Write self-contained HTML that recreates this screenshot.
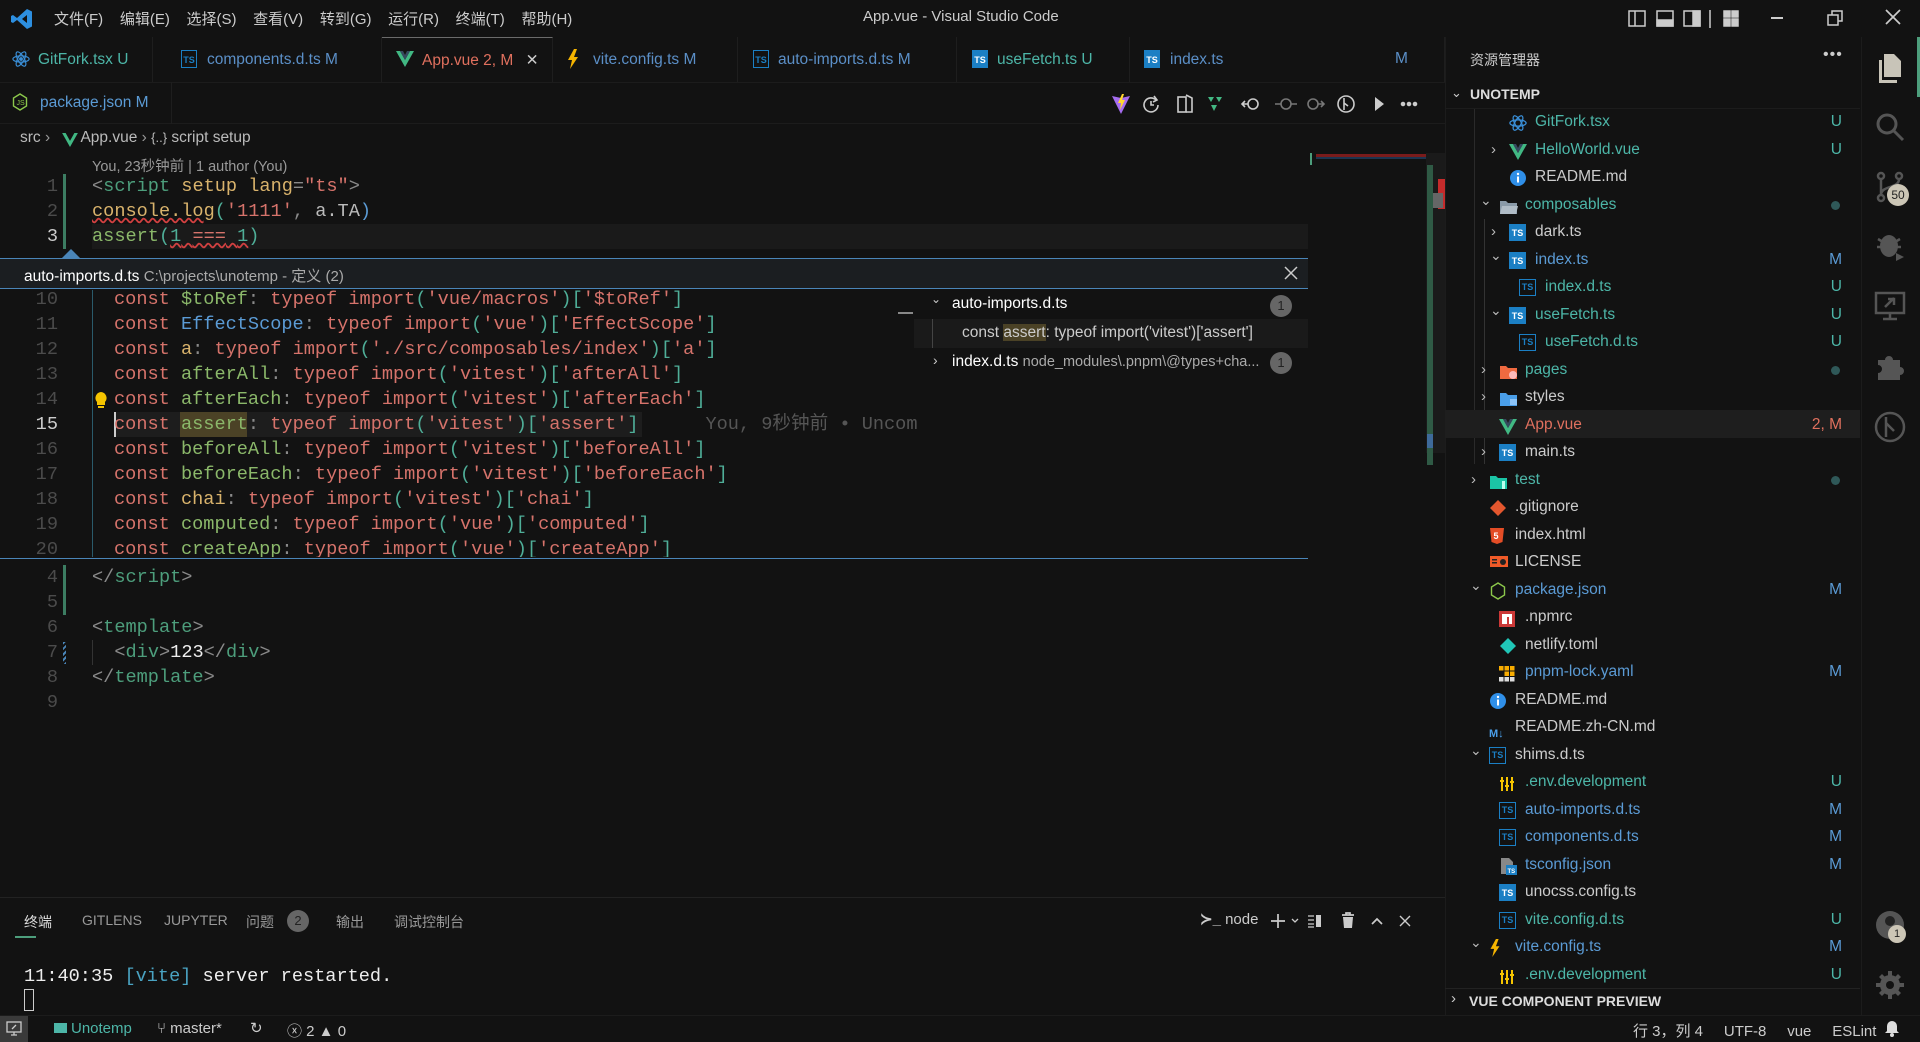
<!DOCTYPE html>
<html><head><meta charset="utf-8">
<style>
*{margin:0;padding:0;box-sizing:border-box}
body{width:1920px;height:1042px;background:#121212;overflow:hidden;position:relative;font-family:"Liberation Sans","Noto Sans CJK SC",sans-serif;color:#ccc;font-size:15px}
.a{position:absolute;white-space:nowrap}
.mono{font-family:"Liberation Mono","Noto Sans CJK SC",monospace;font-size:18.6px}
.ln{position:absolute;width:58px;text-align:right;color:#4b4b4b;font-family:"Liberation Mono",monospace;font-size:18.6px;line-height:25px}
.cl{position:absolute;left:92px;line-height:25px;font-family:"Liberation Mono",monospace;font-size:18.6px;white-space:pre}
.pl{left:114px}
.k{color:#d6736b}.g{color:#8bb86a}.p{color:#4fae98}.s{color:#d6736b}.c{color:#8a8a8a}.b{color:#5b9bd5}.t{color:#4d9e7c}.gr{color:#777}
.tab{position:absolute;height:45px;line-height:45px;border-right:1px solid #1e1e1e;padding-left:16px;font-size:15.5px;color:#5b8fc7}
.row{position:absolute;left:1445px;width:415px;height:27.5px;line-height:27.5px;font-size:15.5px}
.row .ic{position:absolute;top:6px;width:16px;height:16px}
.row .bd{position:absolute;right:18px;top:0}
.chev{position:absolute;top:0;color:#bbb;font-size:13px}
.ts{background:#1b7fc4;color:#fff;font-size:9px;font-weight:bold;text-align:center;line-height:22px;padding-top:2px}
.tso{border:1.5px solid #1b7fc4;color:#1b7fc4;font-size:9px;font-weight:bold;text-align:center;line-height:20px}
.ab{position:absolute;left:1874px;width:32px;height:32px}
</style></head><body>

<!-- title bar -->
<div class="a" style="left:0;top:0;width:1920px;height:37px;background:#121212"></div>
<svg class="a" style="left:10px;top:7px" width="24" height="24" viewBox="0 0 24 24"><path d="M17 2l5 2.5v15L17 22 7 13l-4 3-2-1V9l2-1 4 3 10-9zm0 6l-5 4 5 4z" fill="#2d8fe0"/></svg>
<div class="a" style="left:54px;top:8px;font-size:15px;color:#ccc;word-spacing:0">文件(F)&nbsp;&nbsp;&nbsp;&nbsp;编辑(E)&nbsp;&nbsp;&nbsp;&nbsp;选择(S)&nbsp;&nbsp;&nbsp;&nbsp;查看(V)&nbsp;&nbsp;&nbsp;&nbsp;转到(G)&nbsp;&nbsp;&nbsp;&nbsp;运行(R)&nbsp;&nbsp;&nbsp;&nbsp;终端(T)&nbsp;&nbsp;&nbsp;&nbsp;帮助(H)</div>
<div class="a" style="left:863px;top:8px;font-size:15px;color:#ccc">App.vue - Visual Studio Code</div>
<svg class="a" style="left:1627px;top:8px" width="120" height="22" viewBox="0 0 120 22" fill="none" stroke="#ccc" stroke-width="1.5"><rect x="2" y="3" width="16" height="15"/><line x1="8" y1="3" x2="8" y2="18"/><rect x="30" y="3" width="16" height="15"/><rect x="30" y="12" width="16" height="6" fill="#ccc"/><rect x="57" y="3" width="16" height="15"/><rect x="66" y="3" width="7" height="15" fill="#ccc"/><line x1="83" y1="2" x2="83" y2="20"/><rect x="97" y="3" width="6" height="6" fill="#ccc"/><rect x="105" y="3" width="6" height="6" fill="#ccc"/><rect x="97" y="11" width="6" height="7" fill="#ccc"/><rect x="105" y="11" width="6" height="7" fill="#ccc"/></svg>
<div class="a" style="left:1771px;top:17px;width:12px;height:2px;background:#ccc"></div>
<svg class="a" style="left:1826px;top:9px" width="18" height="18" viewBox="0 0 18 18" fill="none" stroke="#ccc" stroke-width="1.5"><rect x="2" y="6" width="10" height="10"/><path d="M6 6V2h10v10h-4"/></svg>
<svg class="a" style="left:1884px;top:8px" width="18" height="18" viewBox="0 0 18 18" stroke="#ccc" stroke-width="1.7"><path d="M2 2l14 14M16 2L2 16"/></svg>

<!-- tabs -->
<div class="a" style="left:0;top:37px;width:1445px;height:87px;background:#121212;border-bottom:1px solid #1c1c1c"></div>
<div class="a" style="left:0;top:82px;width:1445px;height:1px;background:#1c1c1c"></div>
<div class="tab" style="left:0;top:37px;width:153px;color:#4db6a8;padding-left:38px">GitFork.tsx U</div>
<svg class="a" style="left:12px;top:50px" width="18" height="18" viewBox="0 0 20 20" fill="none" stroke="#3a8fd8" stroke-width="1.3"><ellipse cx="10" cy="10" rx="9" ry="3.5"/><ellipse cx="10" cy="10" rx="9" ry="3.5" transform="rotate(60 10 10)"/><ellipse cx="10" cy="10" rx="9" ry="3.5" transform="rotate(120 10 10)"/><circle cx="10" cy="10" r="1.5" fill="#3a8fd8"/></svg>
<div class="tab" style="left:153px;top:37px;width:229px;padding-left:54px">components.d.ts M</div>
<div class="a tso" style="left:181px;top:50px;width:16px;height:18px;line-height:18px">TS</div>
<div class="tab" style="left:382px;top:37px;width:171px;background:#121212;border-top:1px solid #6b6b6b;color:#e0705e;padding-left:40px">App.vue 2, M <span style="color:#ccc;margin-left:8px">✕</span></div>
<svg class="a" style="left:396px;top:51px" width="18" height="16" viewBox="0 0 18 16"><path d="M0 0h4l5 9 5-9h4L9 16z" fill="#41b883"/><path d="M4 0h3l2 4 2-4h3L9 9z" fill="#35495e"/></svg>
<div class="tab" style="left:553px;top:37px;width:185px;padding-left:40px">vite.config.ts M</div>
<svg class="a" style="left:567px;top:49px" width="12" height="20" viewBox="0 0 12 20"><path d="M7 0L1 11h4l-2 9 8-12H7l3-8z" fill="#f5b400"/></svg>
<div class="tab" style="left:738px;top:37px;width:219px;padding-left:40px">auto-imports.d.ts M</div>
<div class="a tso" style="left:753px;top:50px;width:16px;height:18px;line-height:18px">TS</div>
<div class="tab" style="left:957px;top:37px;width:173px;color:#4db6a8;padding-left:40px">useFetch.ts U</div>
<div class="a ts" style="left:972px;top:50px;width:16px;height:18px;line-height:16px">TS</div>
<div class="tab" style="left:1130px;top:37px;width:315px;padding-left:40px">index.ts</div>
<div class="a" style="left:1395px;top:50px;color:#5b8fc7;font-size:15.5px">M</div>
<div class="a ts" style="left:1144px;top:50px;width:16px;height:18px;line-height:16px">TS</div>
<div class="tab" style="left:0;top:82px;width:172px;padding-left:40px;height:42px;line-height:42px;color:#5b9bd5">package.json M</div>
<svg class="a" style="left:12px;top:93px" width="16" height="18" viewBox="0 0 16 18" fill="none" stroke="#8cc84b" stroke-width="1.4"><path d="M8 1l6.5 4v8L8 17 1.5 13V5z"/><text x="4.5" y="12" font-size="7" fill="#8cc84b" stroke="none">JS</text></svg>
<!-- editor actions -->
<svg class="a" style="left:1110px;top:92px" width="310" height="24" viewBox="0 0 310 24" fill="none" stroke="#ccc" stroke-width="1.6">
<path d="M2 4l9 18 9-18-9 2z" fill="#a56cf0" stroke="none"/><path d="M12 2l-4 9h3l-1 7 5-10h-3l2-6z" fill="#ffd62e" stroke="none"/>
<path d="M46 8a7 7 0 1 0 2 5"/><path d="M44 4l3 4-4 2"/><path d="M41 9v4h3"/>
<rect x="68" y="5" width="8" height="15"/><path d="M76 3l6 3v14h-6"/>
<path d="M98 5l6 0 -3 5z" fill="#42b883" stroke="none"/><path d="M106 5h6l-3 5z" fill="#42b883" stroke="none"/><path d="M101 13h6l-3 6z" fill="#42b883" stroke="none"/>
<circle cx="143" cy="12" r="5"/><path d="M138 12h-6m3-3l-3 3 3 3"/>
<circle cx="176" cy="12" r="5" stroke="#777"/><path d="M165 12h6m10 0h6" stroke="#777"/>
<circle cx="203" cy="12" r="5" stroke="#777"/><path d="M208 12h6m-3-3l3 3-3 3" stroke="#777"/>
<circle cx="236" cy="12" r="8"/><path d="M234 6v12m0-7l4 3"/>
<path d="M265 5l9 7-9 7z" fill="#ccc" stroke="none"/>
<circle cx="293" cy="12" r="1.5" fill="#ccc"/><circle cx="299" cy="12" r="1.5" fill="#ccc"/><circle cx="305" cy="12" r="1.5" fill="#ccc"/></svg>

<!-- breadcrumb -->
<div class="a" style="left:20px;top:129px;font-size:15.5px;color:#bbb">src <span style="color:#999">›</span> <span style="display:inline-block;width:26px"></span>App.vue <span style="color:#999">›</span> <span style="font-size:13px">{..}</span> script setup</div>
<svg class="a" style="left:62px;top:133px" width="16" height="14" viewBox="0 0 18 16"><path d="M0 0h4l5 9 5-9h4L9 16z" fill="#41b883"/></svg>
<div class="a" style="left:92px;top:155px;font-size:14.5px;color:#999">You, 23秒钟前 | 1 author (You)</div>

<!-- editor top lines -->
<div class="a" style="left:63px;top:174px;width:3px;height:75px;background:#3c7d62"></div>
<div class="a" style="left:92px;top:224px;width:1216px;height:25px;background:#1a1a1a"></div>
<div class="ln" style="top:174px">1</div><div class="cl" style="top:174px"><span class="c">&lt;</span><span class="t">script</span> <span style="color:#d9b36c">setup</span> <span style="color:#d9b36c">lang</span><span class="c">=</span><span class="s">"ts"</span><span class="c">&gt;</span></div>
<div class="ln" style="top:199px">2</div><div class="cl" style="top:199px"><span style="color:#d9b36c;text-decoration:underline wavy #d04040">console.log</span><span class="p">(</span><span class="s">'1111'</span><span class="c">,</span> <span style="color:#bbb">a.TA</span><span class="b">)</span></div>
<div class="ln" style="top:224px;color:#ccc">3</div><div class="cl" style="top:224px"><span class="g">assert</span><span class="p">(</span><span style="text-decoration:underline wavy #d04040"><span class="p">1</span> <span class="k">===</span> <span class="p">1</span></span><span class="p">)</span></div>
<div class="a" style="left:62px;top:249px;width:0;height:0;border-left:9px solid transparent;border-right:9px solid transparent;border-bottom:9px solid #4a85b8"></div>

<!-- peek -->
<div class="a" style="left:0;top:258px;width:1308px;height:301px;border-top:1.5px solid #4a85b8;border-bottom:1.5px solid #4a85b8;background:#121212"></div>
<div class="a" style="left:0;top:259px;width:1308px;height:30px;background:#1b1e21;border-bottom:1px solid #4a85b8"></div>
<div class="a" style="left:24px;top:265px;font-size:15.5px;color:#fff">auto-imports.d.ts <span style="color:#aaa;font-size:15px">C:\projects\unotemp - 定义 (2)</span></div>
<svg class="a" style="left:1284px;top:266px" width="14" height="14" viewBox="0 0 14 14" stroke="#ccc" stroke-width="1.5"><path d="M1 1l12 12M13 1L1 13"/></svg>
<div class="a" style="left:0;top:290px;width:918px;height:267px;overflow:hidden">
<div class="a" style="left:92px;top:0;width:1px;height:267px;background:#2a5a6a"></div>
<div class="a" style="left:114px;top:122px;width:528px;height:25px;background:#1d1d1d"></div>
<div class="a" style="left:180px;top:122px;width:67px;height:25px;background:#4b4226"></div>
<div class="a" style="left:114px;top:122px;width:2px;height:25px;background:#ccc"></div>
<div class="ln" style="top:-3px">10</div><div class="cl pl" style="top:-3px"><span class="k">const</span> <span class="g">$toRef</span><span class="c">:</span> <span class="k">typeof import</span><span class="p">(</span><span class="s">'vue/macros'</span><span class="p">)[</span><span class="s">'$toRef'</span><span class="p">]</span></div>
<div class="ln" style="top:22px">11</div><div class="cl pl" style="top:22px"><span class="k">const</span> <span class="b">EffectScope</span><span class="c">:</span> <span class="k">typeof import</span><span class="p">(</span><span class="s">'vue'</span><span class="p">)[</span><span class="s">'EffectScope'</span><span class="p">]</span></div>
<div class="ln" style="top:47px">12</div><div class="cl pl" style="top:47px"><span class="k">const</span> <span style="color:#d9b36c">a</span><span class="c">:</span> <span class="k">typeof import</span><span class="p">(</span><span class="s">'./src/composables/index'</span><span class="p">)[</span><span class="s">'a'</span><span class="p">]</span></div>
<div class="ln" style="top:72px">13</div><div class="cl pl" style="top:72px"><span class="k">const</span> <span class="g">afterAll</span><span class="c">:</span> <span class="k">typeof import</span><span class="p">(</span><span class="s">'vitest'</span><span class="p">)[</span><span class="s">'afterAll'</span><span class="p">]</span></div>
<div class="ln" style="top:97px">14</div><div class="cl pl" style="top:97px"><span class="k">const</span> <span class="g">afterEach</span><span class="c">:</span> <span class="k">typeof import</span><span class="p">(</span><span class="s">'vitest'</span><span class="p">)[</span><span class="s">'afterEach'</span><span class="p">]</span></div>
<svg class="a" style="left:94px;top:101px" width="14" height="18" viewBox="0 0 14 18"><path d="M7 1a6 6 0 0 0-4 10v3h8v-3A6 6 0 0 0 7 1z" fill="#f5c400"/><rect x="4" y="15" width="6" height="2" fill="#f5c400"/></svg>
<div class="ln" style="top:122px;color:#ccc">15</div><div class="cl pl" style="top:122px"><span class="k">const</span> <span class="g">assert</span><span class="c">:</span> <span class="k">typeof import</span><span class="p">(</span><span class="s">'vitest'</span><span class="p">)[</span><span class="s">'assert'</span><span class="p">]</span>      <span style="color:#555">You, 9秒钟前 • Uncommitted</span></div>
<div class="ln" style="top:147px">16</div><div class="cl pl" style="top:147px"><span class="k">const</span> <span class="g">beforeAll</span><span class="c">:</span> <span class="k">typeof import</span><span class="p">(</span><span class="s">'vitest'</span><span class="p">)[</span><span class="s">'beforeAll'</span><span class="p">]</span></div>
<div class="ln" style="top:172px">17</div><div class="cl pl" style="top:172px"><span class="k">const</span> <span class="g">beforeEach</span><span class="c">:</span> <span class="k">typeof import</span><span class="p">(</span><span class="s">'vitest'</span><span class="p">)[</span><span class="s">'beforeEach'</span><span class="p">]</span></div>
<div class="ln" style="top:197px">18</div><div class="cl pl" style="top:197px"><span class="k">const</span> <span style="color:#d9b36c">chai</span><span class="c">:</span> <span class="k">typeof import</span><span class="p">(</span><span class="s">'vitest'</span><span class="p">)[</span><span class="s">'chai'</span><span class="p">]</span></div>
<div class="ln" style="top:222px">19</div><div class="cl pl" style="top:222px"><span class="k">const</span> <span class="g">computed</span><span class="c">:</span> <span class="k">typeof import</span><span class="p">(</span><span class="s">'vue'</span><span class="p">)[</span><span class="s">'computed'</span><span class="p">]</span></div>
<div class="ln" style="top:247px">20</div><div class="cl pl" style="top:247px"><span class="k">const</span> <span class="g">createApp</span><span class="c">:</span> <span class="k">typeof import</span><span class="p">(</span><span class="s">'vue'</span><span class="p">)[</span><span class="s">'createApp'</span><span class="p">]</span></div>
</div>
<div class="a" style="left:898px;top:312px;width:15px;height:1.5px;background:#888"></div>
<div class="a" style="left:918px;top:290px;width:390px;height:267px;background:#121212"></div>
<div class="a" style="left:914px;top:319px;width:394px;height:29px;background:#1a1a1a"></div>
<div class="a" style="left:932px;top:319px;width:1px;height:29px;background:#444"></div>
<div class="a" style="left:931px;top:292px;font-size:12px;color:#ccc">⌄</div>
<div class="a" style="left:952px;top:295px;font-size:15.5px;color:#fff">auto-imports.d.ts</div>
<div class="a" style="left:1270px;top:295px;width:22px;height:22px;border-radius:11px;background:#666;color:#222;font-size:13px;text-align:center;line-height:22px">1</div>
<div class="a" style="left:962px;top:324px;font-size:15.5px;color:#ccc">const <span style="background:#4b4226">assert</span>: typeof import('vitest')['assert']</div>
<div class="a" style="left:933px;top:352px;font-size:14px;color:#ccc">›</div>
<div class="a" style="left:952px;top:353px;font-size:15.5px;color:#fff">index.d.ts <span style="color:#aaa;font-size:14.5px">node_modules\.pnpm\@types+cha...</span></div>
<div class="a" style="left:1270px;top:352px;width:22px;height:22px;border-radius:11px;background:#666;color:#222;font-size:13px;text-align:center;line-height:22px">1</div>

<!-- lower lines -->
<div class="a" style="left:63px;top:565px;width:3px;height:50px;background:#3c7d62"></div>
<div class="a" style="left:63px;top:642px;width:3px;height:22px;background:repeating-linear-gradient(135deg,#4a85b8 0 2px,transparent 2px 4px)"></div>
<div class="a" style="left:92px;top:640px;width:1px;height:25px;background:#333"></div>
<div class="ln" style="top:565px">4</div><div class="cl" style="top:565px"><span class="c">&lt;/</span><span class="t">script</span><span class="c">&gt;</span></div>
<div class="ln" style="top:590px">5</div>
<div class="ln" style="top:615px">6</div><div class="cl" style="top:615px"><span class="c">&lt;</span><span class="t">template</span><span class="c">&gt;</span></div>
<div class="ln" style="top:640px">7</div><div class="cl" style="top:640px">  <span class="c">&lt;</span><span class="t">div</span><span class="c">&gt;</span><span style="color:#eee">123</span><span class="c">&lt;/</span><span class="t">div</span><span class="c">&gt;</span></div>
<div class="ln" style="top:665px">8</div><div class="cl" style="top:665px"><span class="c">&lt;/</span><span class="t">template</span><span class="c">&gt;</span></div>
<div class="ln" style="top:690px">9</div>

<!-- minimap / scrollbar -->
<div class="a" style="left:1310px;top:153px;width:2px;height:12px;background:#4d9e7c"></div>
<div class="a" style="left:1316px;top:154px;width:110px;height:3px;background:#7a1b1b"></div>
<div class="a" style="left:1316px;top:157px;width:110px;height:2px;background:#1e3550"></div>
<div class="a" style="left:1426px;top:153px;width:19px;height:300px;background:#1a1a1a"></div>
<div class="a" style="left:1427px;top:165px;width:6px;height:300px;background:#2f5a45"></div>
<div class="a" style="left:1438px;top:179px;width:7px;height:30px;background:#c42b2b"></div>
<div class="a" style="left:1433px;top:193px;width:10px;height:15px;background:#666"></div>
<div class="a" style="left:1427px;top:434px;width:6px;height:14px;background:#3e6a9a"></div>

<!-- panel -->
<div class="a" style="left:0;top:897px;width:1445px;height:1px;background:#222"></div>
<div class="a" style="left:24px;top:912px;font-size:14px;color:#ddd">终端</div>
<div class="a" style="left:15px;top:936px;width:21px;height:1.5px;background:#4d9e7c"></div>
<div class="a" style="left:82px;top:912px;font-size:14px;color:#999">GITLENS</div>
<div class="a" style="left:164px;top:912px;font-size:14px;color:#999">JUPYTER</div>
<div class="a" style="left:246px;top:912px;font-size:14px;color:#999">问题</div>
<div class="a" style="left:287px;top:910px;width:22px;height:22px;border-radius:11px;background:#666;color:#222;font-size:13px;text-align:center;line-height:22px">2</div>
<div class="a" style="left:336px;top:912px;font-size:14px;color:#999">输出</div>
<div class="a" style="left:394px;top:912px;font-size:14px;color:#999">调试控制台</div>
<div class="a" style="left:1200px;top:910px;font-size:15px;color:#ccc"><b>≻_</b> node</div>
<svg class="a" style="left:1268px;top:910px" width="160" height="22" viewBox="0 0 160 22" fill="none" stroke="#ccc" stroke-width="1.7"><path d="M10 4v14M3 11h14"/><path d="M24 9l3 3 3-3" stroke-width="1.3"/><rect x="48" y="5" width="5" height="12" fill="#ccc" stroke="none"/><path d="M40 6h6M40 10h6M40 14h6M40 17h6" stroke-width="1.3"/><path d="M74 5h12M78 5V3h4v2" /><path d="M75 7h10l-1 11h-8z" fill="#ccc" stroke="none"/><path d="M104 14l5-5 5 5"/><path d="M132 6l10 10M142 6l-10 10" stroke-width="1.4"/></svg>
<div class="a mono" style="left:24px;top:966px;color:#eee;font-size:18.6px">11:40:35 <span style="color:#4aa3c2">[vite]</span> server restarted.</div>
<div class="a" style="left:24px;top:989px;width:10px;height:22px;border:1.5px solid #ccc"></div>

<!-- status bar -->
<div class="a" style="left:0;top:1015px;width:1920px;height:27px;background:#121212;border-top:1px solid #1c1c1c"></div>
<div class="a" style="left:0;top:1016px;width:28px;height:26px;background:#3a3a3a"></div>
<svg class="a" style="left:6px;top:1021px" width="16" height="16" viewBox="0 0 16 16" fill="none" stroke="#ccc" stroke-width="1.3"><rect x="1" y="1" width="14" height="10"/><path d="M8 11v3M5 14h6M6 8l4-4"/></svg>
<div class="a" style="left:54px;top:1020px;font-size:15px;color:#4db6a8"><span style="display:inline-block;width:13px;height:10px;background:#4db6a8;margin-right:4px"></span>Unotemp</div>
<div class="a" style="left:157px;top:1020px;font-size:15px;color:#ccc">⑂ master*</div>
<div class="a" style="left:250px;top:1019px;font-size:15px;color:#ccc">↻</div>
<div class="a" style="left:287px;top:1020px;font-size:15px;color:#ccc">ⓧ 2 ▲ 0</div>
<div class="a" style="left:1633px;top:1020px;font-size:15px;color:#ccc">行 3，列 4&nbsp;&nbsp;&nbsp;&nbsp;&nbsp;UTF-8&nbsp;&nbsp;&nbsp;&nbsp;&nbsp;vue&nbsp;&nbsp;&nbsp;&nbsp;&nbsp;ESLint</div>
<svg class="a" style="left:1884px;top:1020px" width="16" height="17" viewBox="0 0 16 17"><path d="M8 1a5 5 0 0 0-5 5v5l-2 2h14l-2-2V6a5 5 0 0 0-5-5z" fill="#ddd"/><circle cx="8" cy="15" r="2" fill="#ddd"/></svg>

<!-- sidebar -->
<div class="a" style="left:1445px;top:37px;width:416px;height:978px;background:#121212;border-left:1px solid #1c1c1c"></div>
<div class="a" style="left:1470px;top:50px;font-size:14px;color:#ccc">资源管理器</div>
<div class="a" style="left:1823px;top:46px;font-size:16px;color:#ccc;letter-spacing:1px">•••</div>
<div class="a" style="left:1451px;top:85px;font-size:13px;color:#ccc">⌄</div>
<div class="a" style="left:1470px;top:86px;font-size:14px;font-weight:bold;color:#ddd">UNOTEMP</div>
<div class="a" style="left:1445px;top:108px;width:415px;height:1px;background:#1c1c1c"></div>
<div class="a" style="left:1474px;top:109px;width:1px;height:355px;background:#2a2a2a"></div>
<div class="a" style="left:1484px;top:219px;width:1px;height:245px;background:#333"></div>
<div class="a" style="left:1445px;top:410px;width:415px;height:27.5px;background:#1e1e1e"></div>

<div id="tree"></div>
<script>
const rows=[
["GitFork.tsx",2,0,"react","#4db6a8","U"],["HelloWorld.vue",2,">","vue","#4db6a8","U"],["README.md",2,0,"info","#ccc",""],
["composables",1,"v","folder","#4db6a8","dot"],["dark.ts",2,">","ts","#ccc",""],["index.ts",2,"v","ts","#5b9bd5","M"],["index.d.ts",3,0,"tso","#4db6a8","U"],
["useFetch.ts",2,"v","ts","#4db6a8","U"],["useFetch.d.ts",3,0,"tso","#4db6a8","U"],["pages",1,">","fpages","#4db6a8","dot"],["styles",1,">","fstyles","#ccc",""],
["App.vue",1,0,"vue","#e0705e","2, M"],["main.ts",1,">","ts","#ccc",""],["test",0,">","ftest","#4db6a8","dot"],[".gitignore",0,0,"git","#ccc",""],
["index.html",0,0,"html","#ccc",""],["LICENSE",0,0,"lic","#ccc",""],["package.json",0,"v","node","#5b9bd5","M"],[".npmrc",1,0,"npm","#ccc",""],
["netlify.toml",1,0,"netlify","#ccc",""],["pnpm-lock.yaml",1,0,"pnpm","#5b9bd5","M"],["README.md",0,0,"info","#ccc",""],["README.zh-CN.md",0,0,"md","#ccc",""],
["shims.d.ts",0,"v","tso","#ccc",""],[".env.development",1,0,"env","#4db6a8","U"],["auto-imports.d.ts",1,0,"tso","#5b9bd5","M"],["components.d.ts",1,0,"tso","#5b9bd5","M"],
["tsconfig.json",1,0,"tsconf","#5b9bd5","M"],["unocss.config.ts",1,0,"ts","#ccc",""],["vite.config.d.ts",1,0,"tso","#4db6a8","U"],["vite.config.ts",0,"v","vite","#5b9bd5","M"],
[".env.development",1,0,"env","#4db6a8","U"]];
const icons={
react:'<svg width="18" height="18" viewBox="0 0 20 20" fill="none" stroke="#3a8fd8" stroke-width="1.4"><ellipse cx="10" cy="10" rx="9" ry="3.5"/><ellipse cx="10" cy="10" rx="9" ry="3.5" transform="rotate(60 10 10)"/><ellipse cx="10" cy="10" rx="9" ry="3.5" transform="rotate(120 10 10)"/></svg>',
vue:'<svg width="18" height="16" viewBox="0 0 18 16"><path d="M0 0h4l5 9 5-9h4L9 16z" fill="#41b883"/><path d="M4 0h3l2 4 2-4h3L9 9z" fill="#35495e"/></svg>',
info:'<svg width="18" height="18" viewBox="0 0 18 18"><circle cx="9" cy="9" r="8" fill="#2f8fe8"/><rect x="8" y="7.5" width="2" height="6" fill="#fff"/><circle cx="9" cy="5" r="1.2" fill="#fff"/></svg>',
folder:'<svg width="20" height="16" viewBox="0 0 20 16"><path d="M1 2h6l2 2h9v11H1z" fill="#8a9aa8"/><path d="M3 7h16l-2 8H1z" fill="#b0bcc6"/></svg>',
fpages:'<svg width="20" height="16" viewBox="0 0 20 16"><path d="M1 2h6l2 2h9v11H1z" fill="#f06a40"/><circle cx="14" cy="11" r="4" fill="#fbb"/></svg>',
fstyles:'<svg width="20" height="16" viewBox="0 0 20 16"><path d="M1 2h6l2 2h9v11H1z" fill="#4a9ee8"/><path d="M11 8h7v6h-7z" fill="#8cc4f8"/></svg>',
ftest:'<svg width="20" height="16" viewBox="0 0 20 16"><path d="M1 2h6l2 2h9v11H1z" fill="#1bc5a6"/><rect x="13" y="7" width="3" height="8" fill="#bfe"/></svg>',
ts:'<div class="ts" style="width:17px;height:17px;line-height:15px">TS</div>',
tso:'<div class="tso" style="width:17px;height:17px;line-height:14px">TS</div>',
git:'<svg width="18" height="18" viewBox="0 0 18 18"><path d="M9 1l8 8-8 8-8-8z" fill="#e4572e"/></svg>',
html:'<svg width="16" height="18" viewBox="0 0 16 18"><path d="M1 1h14l-1.5 14L8 17l-5.5-2z" fill="#e44d26"/><text x="4.5" y="12" font-size="9" font-weight="bold" fill="#fff">5</text></svg>',
lic:'<svg width="20" height="18" viewBox="0 0 20 18"><rect x="1" y="2" width="18" height="11" fill="#f05a28"/><rect x="3" y="5" width="5" height="1.5" fill="#222"/><rect x="3" y="8" width="5" height="1.5" fill="#222"/><circle cx="14" cy="8" r="3" fill="#222"/></svg>',
node:'<svg width="18" height="18" viewBox="0 0 16 18" fill="none" stroke="#8cc84b" stroke-width="1.4"><path d="M8 1l6.5 4v8L8 17 1.5 13V5z"/></svg>',
npm:'<svg width="16" height="16" viewBox="0 0 16 16"><rect width="16" height="16" fill="#cb3837"/><path d="M3 3h10v10h-3V6H8v7H3z" fill="#fff"/></svg>',
netlify:'<svg width="18" height="18" viewBox="0 0 18 18"><path d="M9 1l8 8-8 8-8-8z" fill="#20c6b7"/></svg>',
pnpm:'<svg width="16" height="16" viewBox="0 0 16 16"><rect x="0" y="0" width="4.5" height="4.5" fill="#f9ad00"/><rect x="5.5" y="0" width="4.5" height="4.5" fill="#f9ad00"/><rect x="11" y="0" width="4.5" height="4.5" fill="#f9ad00"/><rect x="11" y="5.5" width="4.5" height="4.5" fill="#f9ad00"/><rect x="5.5" y="5.5" width="4.5" height="4.5" fill="#f9ad00"/><rect x="0" y="11" width="4.5" height="4.5" fill="#ddd"/><rect x="5.5" y="11" width="4.5" height="4.5" fill="#ddd"/><rect x="11" y="11" width="4.5" height="4.5" fill="#ddd"/></svg>',
md:'<span style="color:#4a9ee8;font-size:11px;font-weight:bold">M↓</span>',
env:'<svg width="16" height="16" viewBox="0 0 16 16" stroke="#f5c400" stroke-width="2"><path d="M3 1v14M8 1v14M13 1v14M1 5h4M6 10h4M11 6h4"/></svg>',
tsconf:'<svg width="18" height="18" viewBox="0 0 18 18"><path d="M2 1h8l4 4v12H2z" fill="#888"/><rect x="7" y="8" width="11" height="10" fill="#1b7fc4"/><text x="8.5" y="16" font-size="6" font-weight="bold" fill="#fff">TS</text></svg>',
vite:'<svg width="12" height="18" viewBox="0 0 12 20"><path d="M7 0L1 11h4l-2 9 8-12H7l3-8z" fill="#f5b400"/></svg>'
};
let h='';
rows.forEach((r,i)=>{
 const top=108+i*27.5, lv=r[1], cx=1471+lv*10, ix=1489+lv*10, tx=1515+lv*10;
 h+=`<div class="row" style="top:${top}px">`;
 if(r[2]===">") h+=`<span class="chev" style="left:${cx-1445}px;font-size:15px;line-height:27px">›</span>`;
 if(r[2]==="v") h+=`<span class="chev" style="left:${cx-1446}px;top:-4px;font-size:14px">⌄</span>`;
 h+=`<span class="ic" style="left:${ix-1445}px">${icons[r[3]]}</span>`;
 h+=`<span style="position:absolute;left:${tx-1445}px;color:${r[4]}">${r[0]}</span>`;
 if(r[5]==="dot") h+=`<span style="position:absolute;right:20px;top:10px;width:9px;height:9px;border-radius:5px;background:#2f5858"></span>`;
 else if(r[5]) h+=`<span class="bd" style="color:${r[4]}">${r[5]}</span>`;
 h+='</div>';
});
document.getElementById('tree').innerHTML=h;
</script>
<div class="a" style="left:1445px;top:988px;width:415px;height:1px;background:#222"></div>
<div class="a" style="left:1451px;top:990px;font-size:15px;color:#ccc">›</div>
<div class="a" style="left:1469px;top:993px;font-size:14px;font-weight:bold;color:#ddd">VUE COMPONENT PREVIEW</div>

<!-- activity bar -->
<div class="a" style="left:1861px;top:37px;width:59px;height:978px;background:#121212;border-left:1px solid #1c1c1c"></div>
<div class="a" style="left:1917px;top:37px;width:3px;height:60px;background:#4d9e7c"></div>
<svg class="ab" style="top:52px" viewBox="0 0 32 32" fill="#c8c4b8"><path d="M10 2h10l7 7v16H10z"/><path d="M5 8h3v20h15v3H5z"/></svg>
<svg class="ab" style="top:111px" viewBox="0 0 32 32" fill="none" stroke="#555" stroke-width="3"><circle cx="13" cy="13" r="9"/><path d="M20 20l9 9"/></svg>
<svg class="ab" style="top:171px" viewBox="0 0 32 32" fill="none" stroke="#555" stroke-width="2.5"><circle cx="7" cy="5" r="3"/><circle cx="7" cy="27" r="3"/><circle cx="25" cy="5" r="3"/><path d="M7 8v16M25 8c0 10-18 6-18 16"/></svg>
<div class="a" style="left:1887px;top:184px;width:22px;height:22px;border-radius:11px;background:#ccc6b6;color:#222;font-size:12px;text-align:center;line-height:22px">50</div>
<svg class="ab" style="top:229px" viewBox="0 0 32 32" fill="#555"><ellipse cx="15" cy="17" rx="9" ry="11"/><path d="M4 10l5 3M26 10l-5 3M3 18h5M22 18h5" stroke="#555" stroke-width="2.5"/><path d="M22 24l8 4-8 4z"/></svg>
<svg class="ab" style="top:290px" viewBox="0 0 32 32" fill="none" stroke="#555" stroke-width="2.5"><rect x="2" y="3" width="28" height="20"/><path d="M16 23v5M9 29h14M11 17l9-9M14 9h6v6"/></svg>
<svg class="ab" style="top:350px" viewBox="0 0 32 32" fill="#555"><path d="M4 10h7a4 4 0 1 1 8 0h7v7a4 4 0 1 1 0 8v5H4v-7a4 4 0 1 0 0-8z"/></svg>
<svg class="ab" style="top:411px" viewBox="0 0 32 32" fill="none" stroke="#555" stroke-width="2.5"><circle cx="16" cy="16" r="14"/><path d="M12 6v20M12 12l8 8"/></svg>
<svg class="ab" style="top:909px" viewBox="0 0 32 32" fill="#555"><circle cx="16" cy="16" r="14"/><circle cx="16" cy="12" r="5" fill="#222"/></svg>
<div class="a" style="left:1888px;top:925px;width:18px;height:18px;border-radius:9px;background:#ccc6b6;color:#222;font-size:11px;text-align:center;line-height:18px">1</div>
<svg class="ab" style="top:969px" viewBox="0 0 32 32" fill="#555"><circle cx="16" cy="16" r="10"/><path d="M14 2h4v6h-4zM14 24h4v6h-4zM2 14h6v4H2zM24 14h6v4h-6zM5 8l3-3 4 4-3 3zM20 23l3-3 4 4-3 3zM5 24l4-4 3 3-4 4zM20 9l4-4 3 3-4 4z"/><circle cx="16" cy="16" r="4" fill="#121212"/></svg>

</body></html>
